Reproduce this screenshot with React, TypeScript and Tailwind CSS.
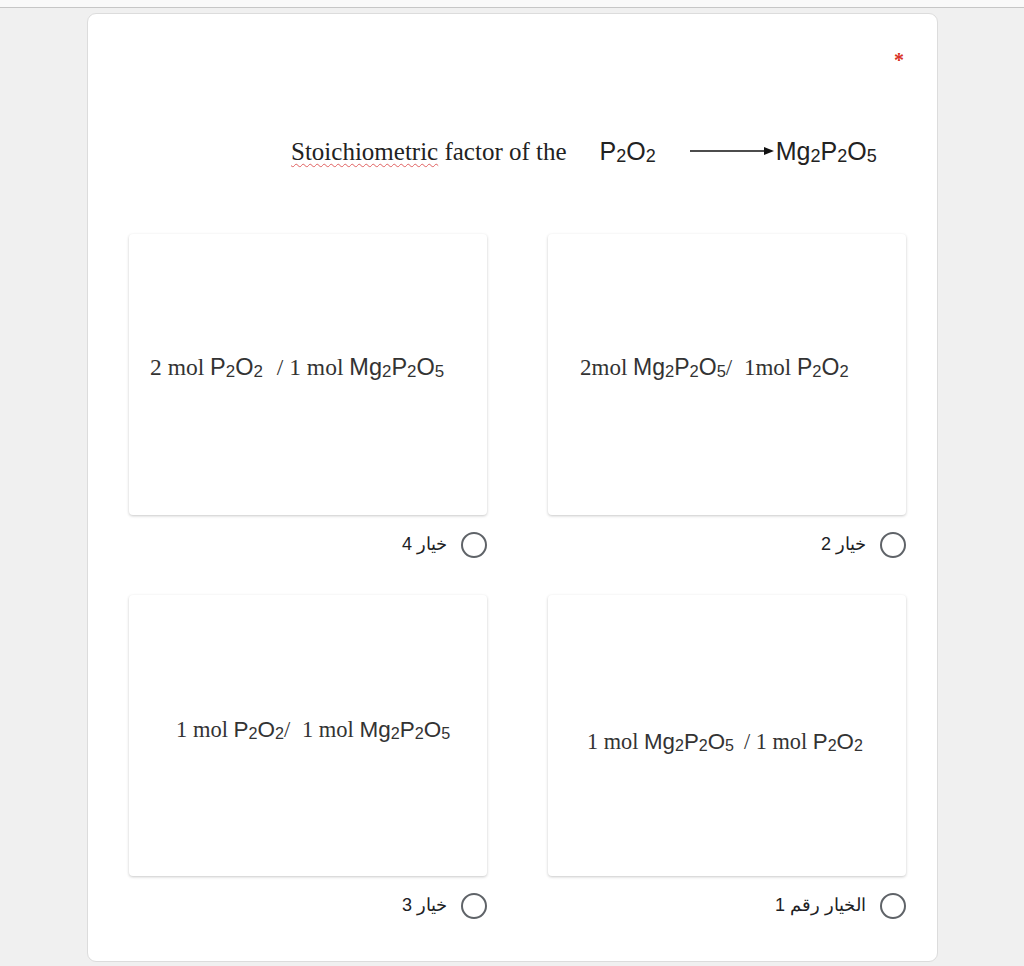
import React from 'react';

const serif = { fontFamily: '"Liberation Serif", "Times New Roman", serif' };

const Sans: React.FC<{ children: React.ReactNode }> = ({ children }) => (
  <span className="font-['Liberation_Sans',Arial,sans-serif]">{children}</span>
);

const Sub: React.FC<{ children: React.ReactNode }> = ({ children }) => (
  <sub className="relative top-[2px] align-baseline text-[0.72em]">{children}</sub>
);

const P2O2 = () => (
  <Sans>
    P<Sub>2</Sub>O<Sub>2</Sub>
  </Sans>
);

const Mg2P2O5 = () => (
  <Sans>
    Mg<Sub>2</Sub>P<Sub>2</Sub>O<Sub>5</Sub>
  </Sans>
);

type OptionProps = {
  label: string;
  content: React.ReactNode;
  textClass: string;
};

const Option: React.FC<OptionProps> = ({ label, content, textClass }) => (
  <div className="flex flex-col">
    <div className="flex h-[281px] w-[358px] items-center rounded-[4px] bg-white shadow-[0_1px_3px_rgba(0,0,0,0.22)]">
      <div className={`whitespace-nowrap text-[#333] ${textClass}`} style={serif}>
        {content}
      </div>
    </div>
    <div dir="rtl" className="flex h-[60px] items-center gap-[14px]">
      <span className="h-[26px] w-[26px] rounded-full border-2 border-[#5f6368]" />
      <span className="font-['Liberation_Sans',Arial,sans-serif] text-[18px] text-[#202124]">
        {label}
      </span>
    </div>
  </div>
);

export default function App() {
  return (
    <div className="min-h-[966px] bg-[#f0f0f0]">
      <div className="h-[8px] border-b border-[#c6c6c6] bg-[#f9f9f9]" />
      <div className="flex pt-[5px] pl-[87px]">
        <div className="h-[949px] w-[851px] rounded-[9px] border border-[#dcdcdc] bg-white">
          <div className="flex justify-end pt-[36px] pr-[33px]">
            <span className="text-[20px] leading-none font-bold text-[#d93025]" style={serif}>*</span>
          </div>
          <div className="mt-[62px] flex items-center pl-[203px] text-[25px] text-[#222]">
            <span style={serif}>
              <span className="underline decoration-wavy decoration-[#e06060] decoration-1 underline-offset-[3px]">
                Stoichiometric
              </span>{' '}
              factor of the
            </span>
            <span className="ml-[33px]">
              <P2O2 />
            </span>
            <svg width="86" height="12" viewBox="0 0 86 12" className="ml-[34px]">
              <line x1="0" y1="6" x2="76" y2="6" stroke="#111" strokeWidth="1.4" />
              <polygon points="74,2 84,6 74,10" fill="#111" />
            </svg>
            <Mg2P2O5 />
          </div>
          <div className="mt-[63px] grid grid-cols-[358px_358px] gap-x-[61px] gap-y-[20px] pl-[41px]">
            <Option
              label="خيار 4"
              textClass="pl-[21px] pb-[12px] text-[23.5px]"
              content={
                <>
                  2 mol <P2O2 />
                  <span className="ml-[14px]">/ 1 mol </span>
                  <Mg2P2O5 />
                </>
              }
            />
            <Option
              label="خيار 2"
              textClass="pl-[32px] pb-[12px] text-[23px]"
              content={
                <>
                  2mol <Mg2P2O5 />/ <span className="ml-[6px]">1mol </span>
                  <P2O2 />
                </>
              }
            />
            <Option
              label="خيار 3"
              textClass="pl-[47px] pb-[10px] text-[22.5px]"
              content={
                <>
                  1 mol <P2O2 />/ <span className="ml-[6px]">1 mol </span>
                  <Mg2P2O5 />
                </>
              }
            />
            <Option
              label="الخيار رقم 1"
              textClass="pl-[39px] pt-[14px] text-[22.3px]"
              content={
                <>
                  1 mol <Mg2P2O5 />
                  <span className="ml-[10px]">/ 1 mol </span>
                  <P2O2 />
                </>
              }
            />
          </div>
        </div>
      </div>
    </div>
  );
}
